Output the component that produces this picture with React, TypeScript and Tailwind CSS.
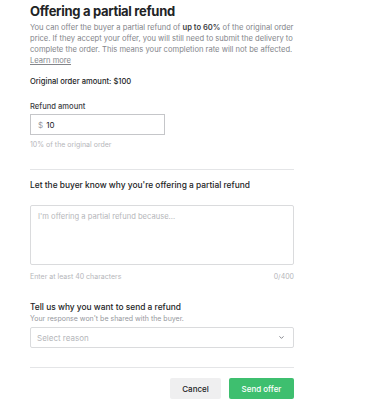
import {ChevronDown} from "lucide-react";

export default function App() {
    return (
        <div className="min-h-[417px] bg-white font-['Inter',sans-serif] text-[#222325]">
            <div className="ml-[30px] w-[264px] pt-[2px]">
                <h1 className="text-[13px] font-bold leading-[18px] tracking-[-0.3px]">Offering a partial refund</h1>
                <p className="mt-[2px] text-[7.6px] leading-[11px] text-[#83858a]">
                    You can offer the buyer a partial refund of <b className="font-semibold text-[#404145]">up to 60%</b> of the original order
                    price. If they accept your offer, you will still need to submit the delivery to
                    complete the order. This means your completion rate will not be affected.
                    <br/>
                    <a href="#" className="underline">Learn more</a>
                </p>

                <p className="mt-[10px] text-[7.6px] font-medium leading-[11px]">Original order amount: $100</p>

                <label className="mt-[14px] block text-[7.6px] font-medium leading-[11px] text-[#404145]">Refund amount</label>
                <div className="mt-[2px] flex h-[21px] w-[135px] items-center border border-[#c5c6c9] px-[7px] text-[8px]">
                    <span className="text-[#95979d]">$</span>
                    <span className="ml-[3px]">10</span>
                </div>
                <p className="mt-[5px] text-[7px] leading-[10px] text-[#b5b6ba]">10% of the original order</p>

                <hr className="mt-[19px] border-[#e4e5e7]"/>

                <p className="mt-[9px] text-[8.4px] font-medium leading-[12px]">Let the buyer know why you're offering a partial refund</p>
                <div className="mt-[14px] h-[60px] rounded-[2px] border border-[#dadbdd] px-[7px] pt-[5px] text-[7.6px] leading-[11px] text-[#b5b6ba]">
                    I'm offering a partial refund because...
                </div>
                <div className="mt-[7px] flex justify-between text-[7px] leading-[10px] text-[#b5b6ba]">
                    <span>Enter at least 40 characters</span>
                    <span>0/400</span>
                </div>

                <p className="mt-[19px] text-[8.4px] font-medium leading-[12px]">Tell us why you want to send a refund</p>
                <p className="text-[7px] leading-[11px] text-[#95979d]">Your response won't be shared with the buyer.</p>
                <div className="mt-[3px] flex h-[21px] items-center justify-between rounded-[2px] border border-[#dadbdd] pl-[6px] pr-[8px] text-[8px] text-[#b5b6ba]">
                    <span>Select reason</span>
                    <ChevronDown className="h-[7px] w-[7px] text-[#74767e]" strokeWidth={3}/>
                </div>

                <hr className="mt-[19px] border-[#e4e5e7]"/>

                <div className="mt-[10px] flex justify-end gap-[8px]">
                    <button className="h-[21px] w-[51px] rounded-[2px] bg-[#efeff0] text-[8px] font-medium text-[#222325]">Cancel</button>
                    <button className="h-[21px] w-[65px] rounded-[2px] bg-[#3ebf6f] text-[8px] font-medium text-white">Send offer</button>
                </div>
            </div>
        </div>
    );
}
